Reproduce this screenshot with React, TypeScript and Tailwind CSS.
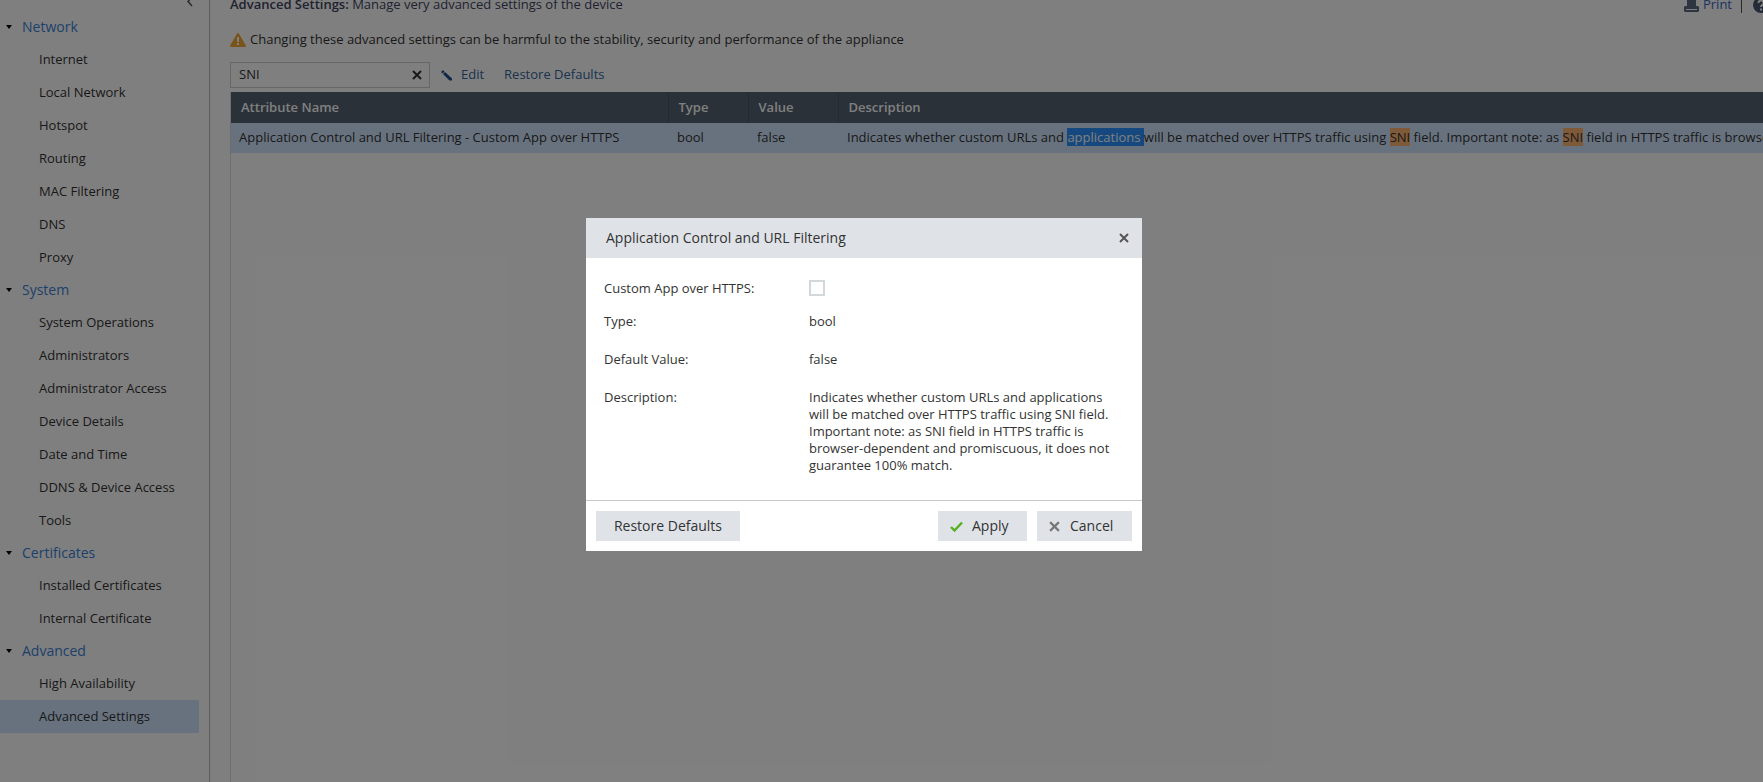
import * as React from 'react';

const sections = [
  {
    title: 'Network',
    items: ['Internet', 'Local Network', 'Hotspot', 'Routing', 'MAC Filtering', 'DNS', 'Proxy'],
  },
  {
    title: 'System',
    items: [
      'System Operations',
      'Administrators',
      'Administrator Access',
      'Device Details',
      'Date and Time',
      'DDNS & Device Access',
      'Tools',
    ],
  },
  { title: 'Certificates', items: ['Installed Certificates', 'Internal Certificate'] },
  { title: 'Advanced', items: ['High Availability', 'Advanced Settings'] },
];

const active = 'Advanced Settings';

function Cross({ className }: { className: string }) {
  return (
    <svg viewBox="0 0 10 10" className={className} aria-hidden="true">
      <path d="M1 1l8 8M9 1l-8 8" stroke="currentColor" strokeWidth="2" fill="none" />
    </svg>
  );
}

function Sidebar() {
  return (
    <nav className="w-[210px] shrink-0 border-r border-[#bcbcbc]">
      <div className="flex h-[11px] justify-end pr-4">
        <svg viewBox="0 0 6 11" className="h-[11px] w-[6px]" aria-hidden="true">
          <path d="M5 -3L1 1.500L5 6" stroke="#555" strokeWidth="1.500" fill="none" />
        </svg>
      </div>
      {sections.map((section) => (
        <div key={section.title}>
          <button className="flex h-8 w-full items-center pl-[6px] text-sm text-[#3b82d6]">
            <svg viewBox="0 0 6 4" className="mr-[10px] h-1 w-[6px]" aria-hidden="true">
              <path d="M0 0h6L3 4z" fill="#000" />
            </svg>
            {section.title}
          </button>
          <ul>
            {section.items.map((item) => (
              <li key={item} className="mr-[10px]">
                <a
                  href="#"
                  className={
                    item === active
                      ? 'flex h-[33px] items-center bg-[#d1e5fe] pl-[39px]'
                      : 'flex h-[33px] items-center pl-[39px]'
                  }
                >
                  {item}
                </a>
              </li>
            ))}
          </ul>
        </div>
      ))}
    </nav>
  );
}

function TopBar() {
  return (
    <div className="flex h-[10px] items-center justify-between whitespace-nowrap text-[#3e4560]">
      <h1>
        <b className="font-semibold">Advanced Settings:</b> Manage very advanced settings of the device
      </h1>
      <div className="flex items-center">
        <button className="flex items-center gap-1 text-[#3867c4]">
          <svg viewBox="0 0 15 14" className="h-[14px] w-[15px]" fill="#5a6b82" aria-hidden="true">
            <path d="M3 0h7l2 2v6H3z" />
            <path d="M1 8h13l1 1v4l-1 1H1l-1-1V9z" />
            <path d="M2 11h11v1H2z" fill="#fff" />
          </svg>
          Print
        </button>
        <span className="ml-[9px] mr-[11px] h-4 w-px bg-[#555]" />
        <button aria-label="Help" className="w-[10px] overflow-hidden">
          <svg viewBox="0 0 16 16" className="h-4 w-4 max-w-none" aria-hidden="true">
            <circle cx="8" cy="8" r="8" fill="#4a5870" />
            <path d="M5.500 6a2.500 2.500 0 1 1 3.600 2.200Q8 8.800 8 10M8 11.500v2" stroke="#fff" strokeWidth="2" fill="none" />
          </svg>
        </button>
      </div>
    </div>
  );
}

function AttributeTable() {
  return (
    <div className="flex-1 overflow-hidden border-l border-[#dcdcdc]">
      <table className="w-full table-fixed border-collapse whitespace-nowrap text-left">
        <colgroup>
          <col className="w-[437px]" />
          <col className="w-[80px]" />
          <col className="w-[90px]" />
          <col />
        </colgroup>
        <thead>
          <tr className="h-[31px] bg-[#566270] text-white">
            <th className="pl-[10px] font-semibold">Attribute Name</th>
            <th className="border-l border-[#46526a] pl-[10px] font-semibold">Type</th>
            <th className="border-l border-[#46526a] pl-[10px] font-semibold">Value</th>
            <th className="border-l border-[#46526a] pl-[10px] font-semibold">Description</th>
          </tr>
        </thead>
        <tbody>
          <tr className="h-[30px] bg-[#d1e5fe]">
            <td className="pl-2">Application Control and URL Filtering - Custom App over HTTPS</td>
            <td className="pl-[9px]">bool</td>
            <td className="pl-[9px]">false</td>
            <td className="pl-[9px]">
              Indicates whether custom URLs and <span className="bg-[#2a91fc] text-white">applications </span>
              will be matched over HTTPS traffic using <mark className="bg-[#fcb472] text-inherit">SNI</mark> field.
              Important note: as <mark className="bg-[#fcb472] text-inherit">SNI</mark> field in HTTPS traffic is
              browser-dependent and promiscuous, it does not guarantee 100% match.
            </td>
          </tr>
        </tbody>
      </table>
    </div>
  );
}

function EditDialog() {
  return (
    <div role="dialog" aria-labelledby="dialog-title" className="w-[556px] bg-white">
      <header className="flex h-10 items-center justify-between bg-[#dfe3e8] pl-5 pr-[13px]">
        <h2 id="dialog-title" className="text-sm">Application Control and URL Filtering</h2>
        <button aria-label="Close">
          <Cross className="h-[10px] w-[10px] text-[#555]" />
        </button>
      </header>
      <div className="grid grid-cols-[205px_1fr] px-[18px] pb-[26px] pt-[22px] leading-[17px]">
        <label htmlFor="custom-app" className="mb-4">Custom App over HTTPS:</label>
        <input
          id="custom-app"
          type="checkbox"
          className="h-4 w-4 appearance-none border-2 border-[#d2d7dc] bg-white"
        />
        <span className="mb-[21px]">Type:</span>
        <span>bool</span>
        <span className="mb-[21px]">Default Value:</span>
        <span>false</span>
        <span>Description:</span>
        <p className="pr-3">
          Indicates whether custom URLs and applications will be matched over HTTPS traffic using SNI field.
          Important note: as SNI field in HTTPS traffic is browser-dependent and promiscuous, it does not
          guarantee 100% match.
        </p>
      </div>
      <footer className="flex gap-[10px] border-t border-[#c8c8c8] px-[10px] py-[10px] text-sm">
        <button className="mr-auto h-[30px] w-36 bg-[#dfe3e8]">Restore Defaults</button>
        <button className="flex h-[30px] w-[89px] items-center gap-[9px] bg-[#dfe3e8] pl-3">
          <svg viewBox="0 0 13 11" className="h-[11px] w-[13px]" aria-hidden="true">
            <path d="M1 6l3.500 3.500L12 1.500" stroke="#55b020" strokeWidth="2.400" fill="none" />
          </svg>
          Apply
        </button>
        <button className="flex h-[30px] w-[95px] items-center gap-[10px] bg-[#dfe3e8] pl-3">
          <Cross className="h-[11px] w-[11px] text-[#777]" />
          Cancel
        </button>
      </footer>
    </div>
  );
}

export default function App() {
  return (
    <div className="relative flex h-screen overflow-hidden bg-white font-['Open_Sans',sans-serif] text-[13px] text-[#333]">
      <Sidebar />
      <main className="flex min-w-0 flex-1 flex-col pl-5">
        <TopBar />
        <div className="mt-5 flex h-5 items-center gap-1">
          <svg viewBox="0 0 16 14" className="h-[14px] w-4" aria-hidden="true">
            <path d="M8 1L15 13H1z" fill="#f0a830" stroke="#f0a830" strokeWidth="2" strokeLinejoin="round" />
            <path d="M8 4v5M8 10v2" stroke="#fff" strokeWidth="2" />
          </svg>
          Changing these advanced settings can be harmful to the stability, security and performance of the appliance
        </div>
        <div className="mb-1 mt-3 flex h-[26px] items-center text-[#35669a]">
          <div className="flex h-[26px] w-[200px] items-center border border-[#cfcfcf] pr-[7px] text-[#333]">
            <input aria-label="Filter" defaultValue="SNI" className="min-w-0 flex-1 pl-2 outline-none" />
            <button aria-label="Clear">
              <Cross className="h-[10px] w-[10px]" />
            </button>
          </div>
          <button className="ml-[11px] flex items-center gap-[9px]">
            <svg viewBox="0 0 11 11" className="h-[11px] w-[11px]" fill="#1d4f88" aria-hidden="true">
              <path d="M2 0L0 2l1.500 1.500 2-2zM4 2L2 4l6.500 6.500H11V8.500z" />
            </svg>
            Edit
          </button>
          <button className="ml-5">Restore Defaults</button>
        </div>
        <AttributeTable />
      </main>
      <div className="absolute inset-0 flex items-center justify-center bg-black/50 pb-[13px] pr-[35px]">
        <EditDialog />
      </div>
    </div>
  );
}
